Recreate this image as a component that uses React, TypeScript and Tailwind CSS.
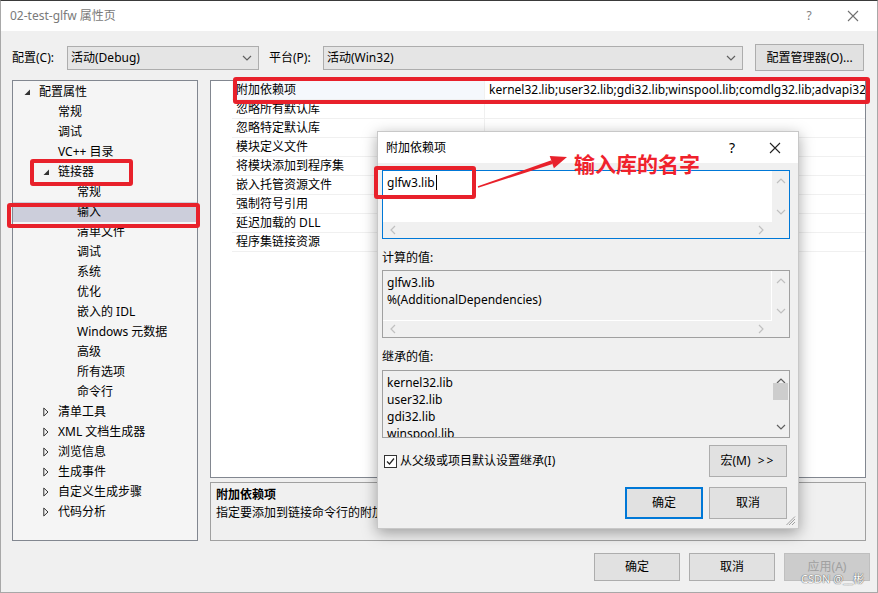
import React from "react";

const tree = [
  { t: "配置属性", l: 0, exp: true },
  { t: "常规", l: 1 },
  { t: "调试", l: 1 },
  { t: "VC++ 目录", l: 1 },
  { t: "链接器", l: 1, exp: true },
  { t: "常规", l: 2 },
  { t: "输入", l: 2, sel: true },
  { t: "清单文件", l: 2 },
  { t: "调试", l: 2 },
  { t: "系统", l: 2 },
  { t: "优化", l: 2 },
  { t: "嵌入的 IDL", l: 2 },
  { t: "Windows 元数据", l: 2 },
  { t: "高级", l: 2 },
  { t: "所有选项", l: 2 },
  { t: "命令行", l: 2 },
  { t: "清单工具", l: 1, col: true },
  { t: "XML 文档生成器", l: 1, col: true },
  { t: "浏览信息", l: 1, col: true },
  { t: "生成事件", l: 1, col: true },
  { t: "自定义生成步骤", l: 1, col: true },
  { t: "代码分析", l: 1, col: true },
];

const indent: Record<number, string> = {
  0: "pl-[7px]",
  1: "pl-[26px]",
  2: "pl-[45px]",
};

const props = [
  "附加依赖项",
  "忽略所有默认库",
  "忽略特定默认库",
  "模块定义文件",
  "将模块添加到程序集",
  "嵌入托管资源文件",
  "强制符号引用",
  "延迟加载的 DLL",
  "程序集链接资源",
];

const Chevron = ({ dir, color = "#606060" }: { dir: "up" | "down" | "left" | "right"; color?: string }) => {
  const d = {
    up: "M1 6 L5 2 L9 6",
    down: "M1 2 L5 6 L9 2",
    left: "M6 1 L2 5 L6 9",
    right: "M2 1 L6 5 L2 9",
  }[dir];
  const vb = dir === "up" || dir === "down" ? "0 0 10 8" : "0 0 8 10";
  const cls = dir === "up" || dir === "down" ? "w-[10px] h-[8px]" : "w-[8px] h-[10px]";
  return (
    <svg viewBox={vb} className={cls}>
      <path d={d} fill="none" stroke={color} strokeWidth="1.2" />
    </svg>
  );
};

const XIcon = ({ color }: { color: string }) => (
  <svg viewBox="0 0 12 12" className="w-[12px] h-[12px]">
    <path d="M1 1 L11 11 M11 1 L1 11" stroke={color} strokeWidth="1.1" />
  </svg>
);

const Button = ({ children, w, primary }: { children: React.ReactNode; w: string; primary?: boolean }) => (
  <div
    className={`${w} h-[32px] flex items-center justify-center bg-[#e1e1e1] ${
      primary ? "border-2 border-[#0078d7]" : "border border-[#adadad]"
    }`}
  >
    {children}
  </div>
);

// scroll box used three times in the dialog
const ScrollBox = ({
  lines,
  edit,
  thumb,
  hscroll = true,
}: {
  lines: string[];
  edit?: boolean;
  thumb?: boolean;
  hscroll?: boolean;
}) => (
  <div
    className={`flex flex-col border ${
      edit ? "h-[69px] border-[#0078d7]" : "h-[68px] border-[#a0a0a0]"
    }`}
  >
    <div className="flex flex-1 min-h-0">
      <div
        className={`flex-1 overflow-hidden pl-[4px] pt-[3px] leading-[17px] ${
          edit ? "bg-white" : hscroll ? "bg-[#f0f0f0] border-r border-b border-white" : "bg-[#f0f0f0]"
        }`}
      >
        {lines.map((l, i) => (
          <div key={i} className="whitespace-nowrap flex items-center">
            {l}
            {edit && <span className="inline-block w-px h-[15px] bg-black ml-[1px]" />}
          </div>
        ))}
      </div>
      <div className="w-[17px] bg-[#f0f0f0] flex flex-col items-center justify-between py-[6px]">
        <Chevron dir="up" color={thumb ? "#606060" : "#c0c0c0"} />
        {thumb && <div className="w-[15px] h-[17px] bg-[#cdcdcd] -mt-[2px] mb-auto" />}
        <Chevron dir="down" color={thumb ? "#606060" : "#c0c0c0"} />
      </div>
    </div>
    {hscroll && (
      <div className="h-[16px] bg-[#f0f0f0] flex items-center justify-between pl-[6px] pr-[24px]">
        <Chevron dir="left" color="#c0c0c0" />
        <Chevron dir="right" color="#c0c0c0" />
      </div>
    )}
  </div>
);

export default function App() {
  return (
    <div className="relative w-[878px] h-[593px] overflow-hidden bg-[#f0f0f0] border-t border-t-[#3a3a3a] border-l border-r border-b border-[#a8a8a8] text-[12px] text-black font-['Noto_Sans','Noto_Sans_CJK_SC',sans-serif]">
      {/* title bar */}
      <div className="h-[30px] bg-white flex items-center pl-[9px] text-[#7a7a7a]">
        <span className="flex-1">02-test-glfw 属性页</span>
        <span className="w-[20px] text-center text-[#808080] mr-[28px]">?</span>
        <span className="mr-[18px]">
          <XIcon color="#707070" />
        </span>
      </div>

      {/* config row */}
      <div className="flex items-center pl-[11px] mt-[13px] h-[27px]">
        <span className="w-[55px]">配置(C):</span>
        <div className="w-[192px] h-[24px] bg-[#e5e5e5] border border-[#adadad] flex items-center pl-[3px] pr-[6px]">
          <span className="flex-1">活动(Debug)</span>
          <Chevron dir="down" />
        </div>
        <span className="w-[54px] ml-[10px]">平台(P):</span>
        <div className="w-[420px] h-[24px] bg-[#e5e5e5] border border-[#adadad] flex items-center pl-[3px] pr-[6px]">
          <span className="flex-1">活动(Win32)</span>
          <Chevron dir="down" />
        </div>
        <div className="ml-[12px] w-[109px] h-[27px] bg-[#e1e1e1] border border-[#adadad] flex items-center justify-center">
          配置管理器(O)...
        </div>
      </div>

      {/* main */}
      <div className="flex px-[11px] mt-[9px] gap-[12px] h-[461px]">
        <div className="w-[187px] h-[461px] bg-[#f5f5f5] border border-[#828790] pt-[1px]">
          {tree.map((n, i) => (
            <div
              key={i}
              className={`h-[20px] flex items-center ${indent[n.l]} ${n.sel ? "bg-[#cccedb]" : ""}`}
            >
              <span className="w-[19px] flex items-center pl-[4px]">
                {n.exp && (
                  <svg viewBox="0 0 7 7" className="w-[7px] h-[7px]">
                    <polygon points="6,0.5 6,6 0.5,6" fill="#333" />
                  </svg>
                )}
                {n.col && (
                  <svg viewBox="0 0 6 10" className="w-[6px] h-[10px]">
                    <polygon points="0.8,1 5,5 0.8,9" fill="none" stroke="#333" strokeWidth="1" />
                  </svg>
                )}
              </span>
              <span className="whitespace-nowrap">{n.t}</span>
            </div>
          ))}
        </div>

        <div className="w-[656px] flex flex-col gap-[4px]">
          <div className="h-[399px] bg-white border border-[#828790]">
            {props.map((p, i) => (
              <div key={i} className="h-[19px] flex">
                <div className="w-[21px]" />
                <div
                  className={`w-[252px] flex items-center pl-[4px] border-b border-[#f0f0f0] ${
                    i === 0 ? "bg-[#f5f8fc]" : ""
                  }`}
                >
                  {p}
                </div>
                <div className="flex-1 flex items-center pl-[4px] border-b border-l border-[#f0f0f0] overflow-hidden whitespace-nowrap">
                  {i === 0 ? "kernel32.lib;user32.lib;gdi32.lib;winspool.lib;comdlg32.lib;advapi32.lib" : ""}
                </div>
              </div>
            ))}
          </div>
          <div className="h-[59px] border border-[#a0a0a0] pl-[5px] pt-[3px] leading-[18px]">
            <div className="font-bold">附加依赖项</div>
            <div>指定要添加到链接命令行的附加项</div>
          </div>
        </div>
      </div>

      {/* bottom buttons */}
      <div className="flex justify-end gap-[9px] pr-[7px] mt-[12px]">
        <div className="w-[86px] h-[28px] bg-[#e1e1e1] border border-[#adadad] flex items-center justify-center">确定</div>
        <div className="w-[86px] h-[28px] bg-[#e1e1e1] border border-[#adadad] flex items-center justify-center">取消</div>
        <div className="w-[86px] h-[28px] bg-[#cccccc] border border-[#bfbfbf] flex items-center justify-center text-[#a0a0a0]">
          应用(A)
        </div>
      </div>

      {/* watermark */}
      <div className="absolute left-[800px] top-[570px] text-[11px] text-white [text-shadow:0_0_1px_#555,0_0_1px_#555] whitespace-nowrap">
        CSDN @__彬
      </div>

      {/* dialog */}
      <div className="absolute left-[376px] top-[130px] w-[422px] h-[398px] bg-[#f0f0f0] border border-[#c8c8c8] shadow-[0_4px_14px_rgba(0,0,0,0.35)] flex flex-col">
        <div className="h-[31px] bg-white flex items-center pl-[8px]">
          <span className="flex-1">附加依赖项</span>
          <span className="text-[14px] mr-[34px]">?</span>
          <span className="mr-[17px]">
            <XIcon color="#222" />
          </span>
        </div>
        <div className="pl-[4px] pr-[8px] pt-[7px] flex flex-col">
          <ScrollBox lines={["glfw3.lib"]} edit />
          <div className="h-[31px] flex items-center pt-[6px]">计算的值:</div>
          <ScrollBox lines={["glfw3.lib", "%(AdditionalDependencies)"]} />
          <div className="h-[32px] flex items-center pt-[6px]">继承的值:</div>
          <ScrollBox lines={["kernel32.lib", "user32.lib", "gdi32.lib", "winspool.lib"]} thumb hscroll={false} />
          <div className="flex items-start mt-[7px] pr-[3px]">
            <div className="flex-1 flex items-center pt-[7px] pl-[2px] gap-[3px]">
              <div className="w-[13px] h-[13px] border border-[#333] bg-white flex items-center justify-center">
                <svg viewBox="0 0 11 11" className="w-[11px] h-[11px]">
                  <path d="M2 5.5 L4.5 8 L9 2.5" fill="none" stroke="#222" strokeWidth="1.2" />
                </svg>
              </div>
              <span>从父级或项目默认设置继承(I)</span>
            </div>
            <Button w="w-[78px]">
              <span>
                宏(M) <span className="ml-[4px] tracking-[2px]">&gt;&gt;</span>
              </span>
            </Button>
          </div>
          <div className="flex justify-end gap-[6px] mt-[10px] pr-[3px]">
            <Button w="w-[78px]" primary>
              确定
            </Button>
            <Button w="w-[78px]">取消</Button>
          </div>
        </div>
        <svg viewBox="0 0 10 10" className="absolute right-[2px] bottom-[2px] w-[10px] h-[10px]">
          <path d="M9 3 L3 9 M9 6 L6 9 M9 0.5 L0.5 9" stroke="#a0a0a0" strokeWidth="1" />
        </svg>
      </div>

      {/* red annotations */}
      <div className="absolute left-[232px] top-[76px] w-[637px] h-[27px] border-[4px] border-[#e8212b] rounded-[3px]" />
      <div className="absolute left-[29px] top-[158px] w-[103px] h-[27px] border-[4px] border-[#e8212b] rounded-[3px]" />
      <div className="absolute left-[6px] top-[202px] w-[193px] h-[25px] border-[4px] border-[#e8212b] rounded-[3px]" />
      <div className="absolute left-[373px] top-[165px] w-[102px] h-[33px] border-[4px] border-[#e8212b] rounded-[3px]" />
      <svg viewBox="0 0 100 50" className="absolute left-[470px] top-[145px] w-[100px] h-[50px]">
        <polygon points="6.8,40.3 80.4,14.3 81.6,18.1 7.2,41.7" fill="#e8212b" />
        <polygon points="96,11 78.7,9.9 82.9,22.3" fill="#e8212b" />
      </svg>
      <div className="absolute left-[573px] top-[149px] text-[21px] leading-[27px] font-bold text-[#f0222c] font-['Noto_Sans_CJK_SC',sans-serif]">
        输入库的名字
      </div>
    </div>
  );
}
